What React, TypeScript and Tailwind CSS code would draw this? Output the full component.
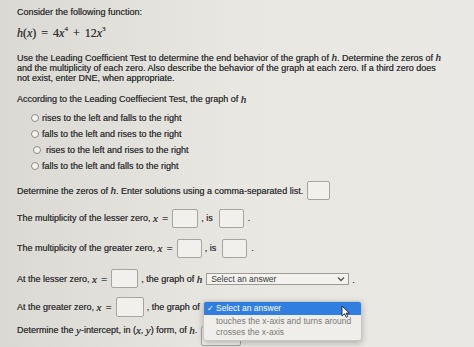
import React from 'react';

const M: React.FC<{ children: React.ReactNode; className?: string }> = ({ children, className = '' }) => (
  <span className={`font-['Liberation_Serif',serif] italic text-[11px] ${className}`}>{children}</span>
);

const Eq: React.FC = () => (
  <span className="font-['Liberation_Serif',serif] text-[11px] mx-[4px]">=</span>
);

const Box: React.FC<{ className?: string }> = ({ className = '' }) => (
  <div className={`h-[19px] border border-[#a6a5a0] bg-[#f1f0ec] rounded-[2px] shrink-0 ${className}`} />
);

const Radio: React.FC<{ label: string; shift?: boolean }> = ({ label, shift }) => (
  <div className="flex items-center h-[16px]">
    <div
      className={`w-[8px] h-[8px] rounded-full border border-[#8d8c88] bg-[#f3f2ef] ${shift ? 'ml-[16px] mr-[5px]' : 'ml-[14px] mr-[3px]'}`}
    />
    <span>{label}</span>
  </div>
);

const options = [
  'rises to the left and falls to the right',
  'falls to the left and rises to the right',
  'rises to the left and rises to the right',
  'falls to the left and falls to the right',
];

const App: React.FC = () => {
  return (
    <div className="relative w-[474px] h-[347px] overflow-hidden bg-gradient-to-r from-[#dad9d3] via-[#e8e7e2] to-[#e9e8e4] pl-[17px] pt-[7px] text-[9px] leading-[10px] text-[#353535] [text-shadow:0_0_0.5px_#555] font-['Liberation_Sans',Arial,sans-serif] whitespace-nowrap">
      <div>Consider the following function:</div>

      <div className="mt-[9px] h-[14px] flex items-center font-['Liberation_Serif',serif] text-[12px]">
        <i>h</i>(<i>x</i>)<span className="mx-[5px]">=</span>4<i>x</i>
        <sup className="text-[7px] -top-[4px]">4</sup>
        <span className="mx-[5px]">+</span>12<i>x</i>
        <sup className="text-[7px] -top-[4px]">3</sup>
      </div>

      <div className="mt-[12px]">
        Use the Leading Coefficient Test to determine the end behavior of the graph of <M className="text-[10px]">h</M>. Determine the zeros of <M className="text-[10px]">h</M>
        <br />
        and the multiplicity of each zero. Also describe the behavior of the graph at each zero. If a third zero does
        <br />
        not exist, enter DNE, when appropriate.
      </div>

      <div className="mt-[10px] flex items-center h-[11px]">
        According to the Leading Coeffiecient Test, the graph of&nbsp;<M>h</M>
      </div>

      <div className="mt-[6px] flex flex-col">
        {options.map((o, i) => (
          <Radio key={i} label={o} shift={i === 2} />
        ))}
      </div>

      <div className="mt-[6px] flex items-center h-[20px]">
        <span>
          Determine the zeros of <M className="text-[10px]">h</M>. Enter solutions using a comma-separated list.
        </span>
        <Box className="ml-[4px] w-[23px] h-[18px]" />
      </div>

      <div className="mt-[8px] flex items-center h-[20px]">
        <span>The multiplicity of the lesser zero,&nbsp;</span>
        <M>x</M>
        <Eq />
        <Box className="w-[26px]" />
        <span className="ml-[3px]">, is</span>
        <Box className="ml-[6px] w-[25px]" />
        <span className="ml-[4px]">.</span>
      </div>

      <div className="mt-[10px] flex items-center h-[20px]">
        <span>The multiplicity of the greater zero,&nbsp;</span>
        <M>x</M>
        <Eq />
        <Box className="w-[25px]" />
        <span className="ml-[3px]">, is</span>
        <Box className="ml-[6px] w-[25px]" />
        <span className="ml-[4px]">.</span>
      </div>

      <div className="mt-[11px] flex items-center h-[19px]">
        <span>At the lesser zero,&nbsp;</span>
        <M>x</M>
        <Eq />
        <Box className="w-[27px] h-[18px]" />
        <span className="ml-[3px]">, the graph of&nbsp;</span>
        <M>h</M>
        <div className="ml-[4px] w-[143px] h-[12px] border border-[#9c9b97] bg-[#f3f2ee] flex items-center justify-between pl-[4px] pr-[3px] text-[8.5px] text-[#3a3a3a] [text-shadow:none]">
          <span>Select an answer</span>
          <svg width="8" height="6" viewBox="0 0 8 6">
            <path d="M1 1.5 L4 4.5 L7 1.5" fill="none" stroke="#555" strokeWidth="1.3" />
          </svg>
        </div>
        <span className="ml-[3px] self-end mb-[3px]">.</span>
      </div>

      <div className="mt-[9px] flex items-center h-[20px]">
        <span>At the greater zero,&nbsp;</span>
        <M>x</M>
        <Eq />
        <Box className="w-[28px] h-[20px]" />
        <span className="ml-[3px]">, the graph of</span>
      </div>

      <div className="mt-[6px] flex items-center h-[14px]">
        <span>Determine the&nbsp;</span>
        <M>y</M>
        <span>-intercept, in (</span>
        <M>x</M>
        <span>,&nbsp;</span>
        <M>y</M>
        <span>) form, of&nbsp;</span>
        <M>h</M>
        <span>.</span>
        <Box className="ml-[4px] w-[40px] h-[20px] mt-[12px]" />
      </div>

      {/* open select menu */}
      <div className="absolute left-[203px] top-[301px] w-[159px] h-[40px] bg-[#efeeeb] border border-[#c9c8c4] rounded-[3px] shadow-[0_2px_6px_rgba(0,0,0,0.25)] text-[8.5px] leading-[11px] overflow-hidden [text-shadow:none]">
        <div className="h-[13px] bg-[#2f7ee0] text-white flex items-center">
          <span className="w-[12px] text-center text-[8px]">✓</span>
          <span>Select an answer</span>
        </div>
        <div className="pl-[12px] text-[#7a7a77] mt-[1px]">touches the x-axis and turns around</div>
        <div className="pl-[12px] text-[#7a7a77]">crosses the x-axis</div>
      </div>

      {/* mouse cursor */}
      <svg className="absolute left-[341px] top-[305px]" width="9" height="13" viewBox="0 0 9 13">
        <path d="M1 1 L1 11 L3.5 8.7 L5.3 12.3 L6.8 11.6 L5.1 8.1 L8.3 8.1 Z" fill="#fff" stroke="#222" strokeWidth="0.9" />
      </svg>
    </div>
  );
};

export default App;
